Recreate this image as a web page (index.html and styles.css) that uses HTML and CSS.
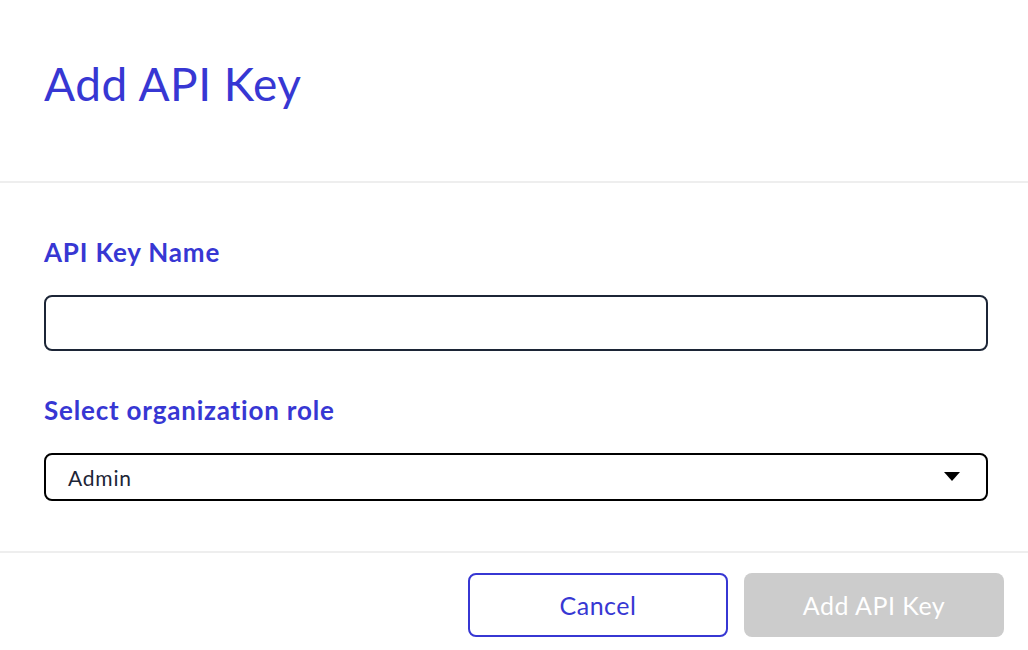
FILE: index.html
```html
<!DOCTYPE html>
<html lang="en">
<head>
    <meta charset="UTF-8">
    <title>Add API Key</title>
    <link rel="stylesheet" href="styles.css">
</head>
<body>

    <div class="modal">
        <div class="modal-header">
            <h1>Add API Key</h1>
        </div>

        <form class="modal-body">
            <label class="field-label" for="keyName">API Key Name</label>
            <input type="text" id="keyName" class="text-input">

            <label class="field-label" for="role">Select organization role</label>
            <div class="select-box">
                <span class="select-value">Admin</span>
                <svg class="select-arrow" width="16" height="10" viewBox="0 0 16 10">
                    <path d="M0 0 H16 L8 9 Z" fill="#000"/>
                </svg>
            </div>
        </form>

        <div class="modal-footer">
            <button type="button" class="btn btn-outline">Cancel</button>
            <button type="button" class="btn btn-disabled" disabled>Add API Key</button>
        </div>
    </div>

</body>
</html>
```

FILE: styles.css
```css
body {
    margin: 0;
    font-family: Lato, 'Open Sans', sans-serif;
    background-color: #ffffff;
    color: #1c2536;
}
.modal {
    width: 1028px;
}
.modal-header {
    height: 183px;
    box-sizing: border-box;
    border-bottom: 2px solid #eeeeee;
    display: flex;
    align-items: center;
    padding: 0 44px 14px;
}
h1 {
    margin: 0;
    font-size: 46px;
    font-weight: 400;
    letter-spacing: 0.5px;
    color: #3737d3;
}
.modal-body {
    display: flex;
    flex-direction: column;
    padding: 54px 40px 50px 44px;
    border-bottom: 2px solid #eeeeee;
}
.field-label {
    font-size: 26px;
    font-weight: 700;
    letter-spacing: 0.8px;
    color: #3737d3;
    line-height: 30px;
    margin-bottom: 28px;
}
.text-input {
    height: 56px;
    box-sizing: border-box;
    border: 2px solid #1c2536;
    border-radius: 8px;
    margin-bottom: 44px;
    font: inherit;
}
.select-box {
    height: 48px;
    box-sizing: border-box;
    border: 2px solid #000000;
    border-radius: 8px;
    display: flex;
    align-items: center;
    justify-content: space-between;
    padding: 0 26px 0 22px;
}
.select-value {
    font-size: 21px;
    letter-spacing: 0.8px;
    color: #1c2536;
}
.modal-footer {
    display: flex;
    justify-content: flex-end;
    gap: 16px;
    padding: 20px 24px;
}
.btn {
    width: 260px;
    height: 64px;
    border-radius: 8px;
    font-family: inherit;
    font-size: 25px;
    letter-spacing: 0.5px;
}
.btn-outline {
    background: #ffffff;
    border: 2px solid #3737d3;
    color: #3737d3;
    cursor: pointer;
}
.btn-disabled {
    background: #cccccc;
    border: none;
    color: #ffffff;
}
```
